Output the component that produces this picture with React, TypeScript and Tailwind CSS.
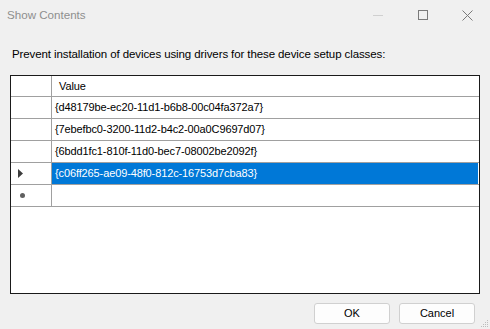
import React from "react";

const rows = [
  "{d48179be-ec20-11d1-b6b8-00c04fa372a7}",
  "{7ebefbc0-3200-11d2-b4c2-00a0C9697d07}",
  "{6bdd1fc1-810f-11d0-bec7-08002be2092f}",
  "{c06ff265-ae09-48f0-812c-16753d7cba83}",
];

export default function App() {
  return (
    <div
      className="w-[490px] h-[329px] bg-[#f0f0f0] flex flex-col text-[11.5px] text-black overflow-hidden"
      style={{ fontFamily: '"Liberation Sans", Arial, sans-serif' }}
    >
      {/* Title bar */}
      <div className="h-[30px] flex items-center shrink-0">
        <span className="pl-[7px] text-[#8e8e8e] text-[11.6px]">Show Contents</span>
        <div className="ml-auto flex items-center h-full">
          <div className="w-[45px] h-full flex items-center justify-center">
            <div className="w-[10px] h-px bg-[#d0d0d0]" />
          </div>
          <div className="w-[45px] h-full flex items-center justify-center">
            <div className="w-[10px] h-[10px] border border-[#7a7a7a]" />
          </div>
          <div className="w-[45px] h-full flex items-center justify-center">
            <svg width="11" height="11" viewBox="0 0 11 11">
              <path d="M0.5 0.5L10.5 10.5M10.5 0.5L0.5 10.5" stroke="#7a7a7a" strokeWidth="1" />
            </svg>
          </div>
        </div>
      </div>

      {/* Prompt */}
      <div className="pl-[12px] pt-[17px] h-[45px] shrink-0 leading-[15px] tracking-[-0.1px]">
        Prevent installation of devices using drivers for these device setup classes:
      </div>

      {/* Grid */}
      <div className="mx-[10px] h-[219px] border border-[#1a1a1a] bg-white shrink-0 text-[11px] tracking-[-0.12px]">
        <div className="flex flex-col">
          <div className="flex h-[21px] border-b border-[#a0a0a0]">
            <div className="w-[41px] border-r border-[#a0a0a0]" />
            <div className="flex-1 pl-[7px] flex items-center">Value</div>
          </div>
          {rows.map((r, i) => {
            const selected = i === 3;
            return (
              <div key={r} className="flex h-[22px] border-b border-[#a0a0a0]">
                <div className="w-[41px] border-r border-[#a0a0a0] flex items-center pl-[7px]">
                  {selected && (
                    <svg width="5" height="9" viewBox="0 0 5 9">
                      <path d="M0 0L5 4.5L0 9Z" fill="#3c3c3c" />
                    </svg>
                  )}
                </div>
                <div
                  className={
                    selected
                      ? "flex-1 pl-[3px] flex items-center bg-[#0078d7] text-white mr-[1px]"
                      : "flex-1 pl-[3px] flex items-center"
                  }
                >
                  {r}
                </div>
              </div>
            );
          })}
          <div className="flex h-[22px] border-b border-[#a0a0a0]">
            <div className="w-[41px] border-r border-[#a0a0a0] flex items-center pl-[9px]">
              <div className="w-[5px] h-[5px] rounded-full bg-[#606060]" />
            </div>
            <div className="flex-1" />
          </div>
        </div>
      </div>

      {/* Buttons */}
      <div className="flex justify-end gap-[9px] pr-[15px] pt-[9px] relative flex-1">
        <button className="w-[76px] h-[21px] rounded-[3px] border border-[#d0d0d0] bg-[#fdfdfd] text-[11px]">
          OK
        </button>
        <button className="w-[76px] h-[21px] rounded-[3px] border border-[#d0d0d0] bg-[#fdfdfd] text-[11px]">
          Cancel
        </button>
        <svg className="absolute right-[1px] bottom-[1px]" width="8" height="8" viewBox="0 0 8 8">
          <rect x="6" y="0" width="1" height="1" fill="#bdbdbd" />
          <rect x="4" y="2" width="1" height="1" fill="#bdbdbd" />
          <rect x="6" y="2" width="1" height="1" fill="#bdbdbd" />
          <rect x="2" y="4" width="1" height="1" fill="#bdbdbd" />
          <rect x="4" y="4" width="1" height="1" fill="#bdbdbd" />
          <rect x="6" y="4" width="1" height="1" fill="#bdbdbd" />
          <rect x="0" y="6" width="1" height="1" fill="#bdbdbd" />
          <rect x="2" y="6" width="1" height="1" fill="#bdbdbd" />
          <rect x="4" y="6" width="1" height="1" fill="#bdbdbd" />
          <rect x="6" y="6" width="1" height="1" fill="#bdbdbd" />
        </svg>
      </div>
    </div>
  );
}
